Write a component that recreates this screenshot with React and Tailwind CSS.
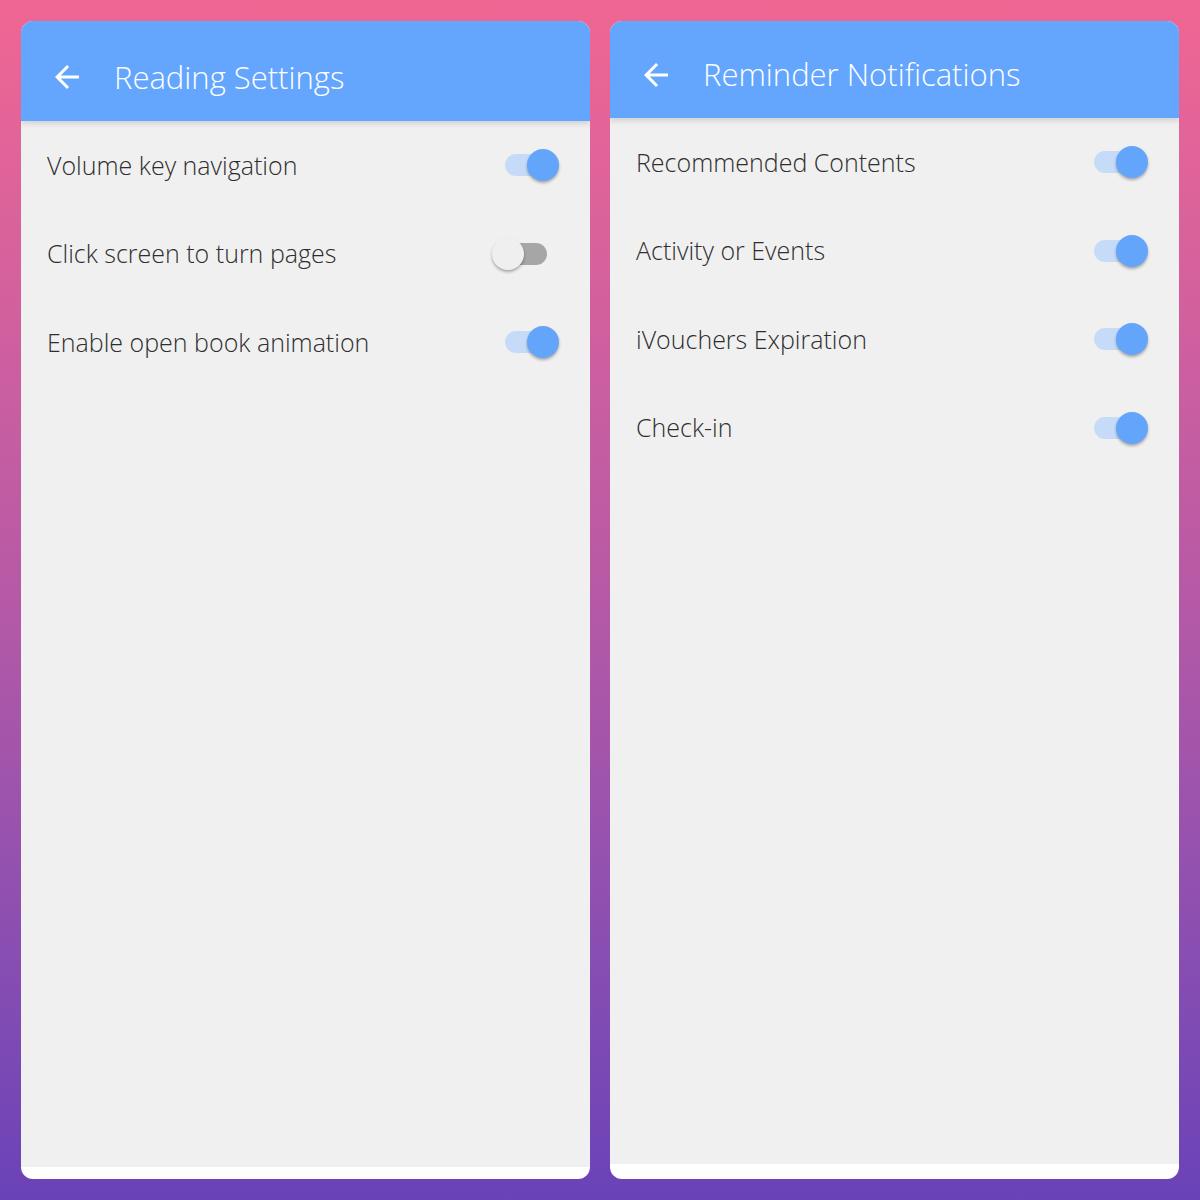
import React from "react";

const font = { fontFamily: '"Open Sans", "Noto Sans", sans-serif' };

function BackArrow() {
  return (
    <svg width="36" height="36" viewBox="0 0 24 24" className="shrink-0">
      <path
        fill="#ffffff"
        d="M20 11H7.83l5.59-5.59L12 4l-8 8 8 8 1.41-1.41L7.83 13H20v-2z"
      />
    </svg>
  );
}

function Toggle({ on }) {
  return (
    <div className="relative w-[67px] h-[32px] shrink-0">
      <div
        className={
          on
            ? "absolute left-[13px] top-[5px] w-[42px] h-[22px] rounded-full bg-[#c6dbf7]"
            : "absolute left-[13px] top-[5px] w-[42px] h-[22px] rounded-full bg-[#a6a6a6]"
        }
      />
      <div
        className={
          on
            ? "absolute left-[35px] top-0 w-[32px] h-[32px] rounded-full bg-[#64a5fc] shadow-[0_2px_3px_rgba(0,0,0,0.3)]"
            : "absolute left-0 top-0 w-[32px] h-[32px] rounded-full bg-[#efefef] shadow-[0_2px_3px_rgba(0,0,0,0.3)]"
        }
      />
    </div>
  );
}

function Card({ title, items, headerH, headerPt, bottom }) {
  return (
    <div className="w-[569px] h-[1158px] bg-white rounded-[12px] overflow-hidden flex flex-col">
      <div
        className={`${headerH} ${headerPt} bg-[#64a6fd] flex items-center pl-[28px] shadow-[0_3px_5px_rgba(0,0,0,0.12)] relative z-10 shrink-0`}
      >
        <BackArrow />
        <span
          className="ml-[29px] text-white text-[31px] font-light leading-none"
          style={font}
        >
          {title}
        </span>
      </div>
      <div className={`flex-1 bg-[#f0f0f0] ${bottom}`}>
        {items.map((it) => (
          <div
            key={it.label}
            className="h-[88.5px] flex items-center justify-between pl-[26px] pr-[31px]"
          >
            <span
              className="text-[25px] text-[#2e2e2e] font-light"
              style={font}
            >
              {it.label}
            </span>
            <Toggle on={it.on} />
          </div>
        ))}
      </div>
    </div>
  );
}

export default function App() {
  return (
    <div className="w-[1200px] h-[1200px] bg-gradient-to-b from-[#f06693] via-[#b659a6] to-[#6a42b8] flex gap-[20px] pl-[21px] pt-[21px]">
      <Card
        title="Reading Settings"
        headerH="h-[100px]"
        headerPt="pt-[12px]"
        bottom="mb-[12px]"
        items={[
          { label: "Volume key navigation", on: true },
          { label: "Click screen to turn pages", on: false },
          { label: "Enable open book animation", on: true },
        ]}
      />
      <Card
        title="Reminder Notifications"
        headerH="h-[97px]"
        headerPt="pt-[10px]"
        bottom="mb-[15px]"
        items={[
          { label: "Recommended Contents", on: true },
          { label: "Activity or Events", on: true },
          { label: "iVouchers Expiration", on: true },
          { label: "Check-in", on: true },
        ]}
      />
    </div>
  );
}
